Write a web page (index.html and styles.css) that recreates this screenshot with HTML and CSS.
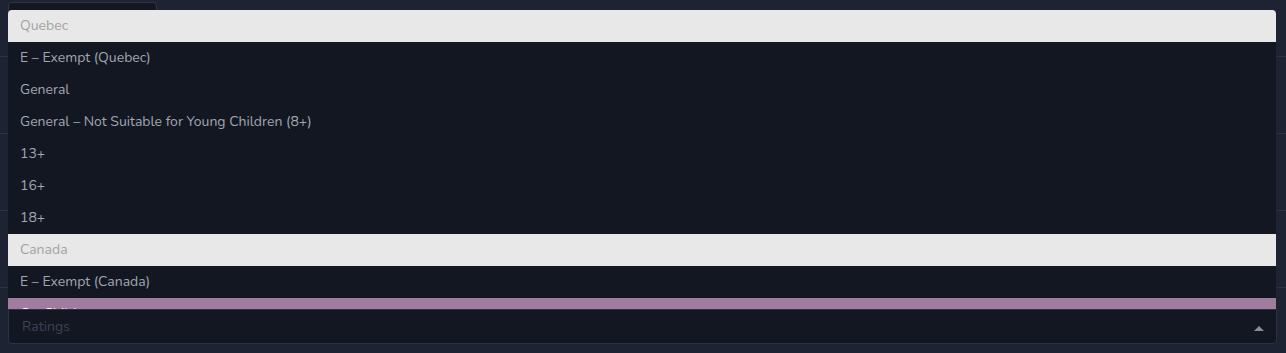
FILE: index.html
```html
<!DOCTYPE html>
<html>
<head>
<meta charset="utf-8">
<link rel="stylesheet" href="styles.css">
</head>
<body>
<div class="page">
  <div class="tab"></div>
  <div class="rows">
    <div class="row r1"></div>
    <div class="row"></div>
    <div class="row"></div>
    <div class="row"></div>
  </div>
</div>
<div class="select">
  <ul class="list">
    <li class="group">Quebec</li>
    <li class="opt">E – Exempt (Quebec)</li>
    <li class="opt">General</li>
    <li class="opt">General – Not Suitable for Young Children (8+)</li>
    <li class="opt">13+</li>
    <li class="opt">16+</li>
    <li class="opt">18+</li>
    <li class="group">Canada</li>
    <li class="opt">E – Exempt (Canada)</li>
    <li class="opt active">C – Children</li>
  </ul>
  <div class="control">
    <span class="placeholder">Ratings</span>
    <span class="arrow"></span>
  </div>
</div>
</body>
</html>
```
FILE: styles.css
```css
html, body {
  margin: 0;
  padding: 0;
  background: #1d2333;
  font-family: "Nunito", "Lato", "Noto Sans", sans-serif;
  height: 353px;
  overflow: hidden;
}
.page {
  padding-top: 2px;
}
.tab {
  margin-left: 8px;
  width: 147px;
  height: 20px;
  background: #131722;
  border: 1px solid #2e3546;
  border-radius: 4px 4px 0 0;
}
.row {
  height: 76px;
  border-bottom: 1px solid #2b3242;
}
.row.r1 {
  height: 32px;
}
.select {
  position: absolute;
  left: 8px;
  top: 10px;
  width: 1269px;
}
.list {
  list-style: none;
  margin: 0;
  padding: 0;
  width: 1268px;
  height: 299px;
  overflow: hidden;
  border-radius: 4px 4px 0 0;
  background: #131722;
  position: relative;
  z-index: 2;
}
.list li {
  height: 32px;
  line-height: 31px;
  padding-left: 12px;
  font-size: 14px;
}
.group {
  background: #e8e8e8;
  color: #a3a3a3;
}
.opt {
  background: #131722;
  color: #a0a6b2;
}
.opt.active {
  background: #a17c9e;
  color: #ffffff;
}
.control {
  height: 35px;
  box-sizing: border-box;
  border: 1px solid #2b3244;
  border-radius: 0 0 4px 4px;
  background: #131722;
  display: flex;
  align-items: center;
  justify-content: space-between;
  padding: 0 12px 0 13px;
}
.placeholder {
  color: #3a4255;
  font-size: 14px;
}
.arrow {
  width: 0;
  height: 0;
  border-left: 5px solid transparent;
  border-right: 5px solid transparent;
  border-bottom: 5px solid #8a8d94;
  margin-top: 4px;
}
```
